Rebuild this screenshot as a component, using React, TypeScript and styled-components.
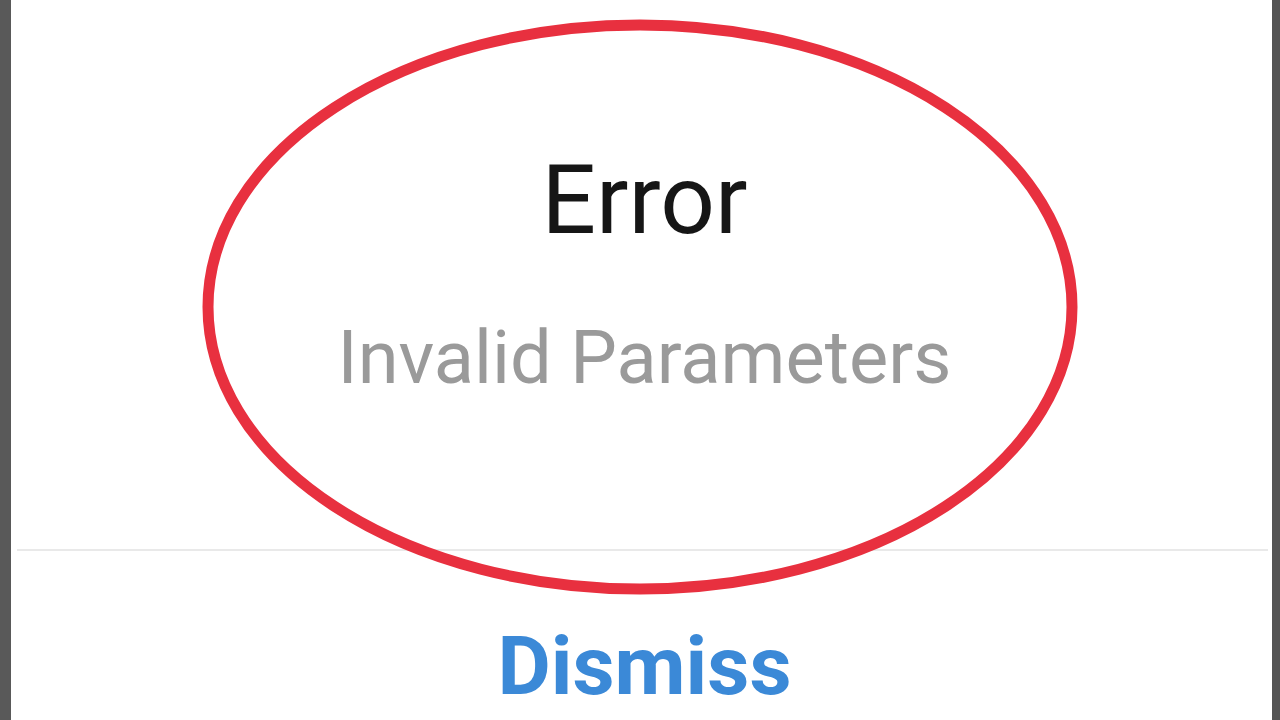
import React from "react";
import styled, { createGlobalStyle } from "styled-components";

const Global = createGlobalStyle`
  html, body { margin: 0; padding: 0; background: #ffffff; }
  body { font-family: Roboto, "Liberation Sans", sans-serif; }
`;

const Screen = styled.div`
  position: relative;
  display: flex;
  width: 1280px;
  height: 720px;
  overflow: hidden;
  background: #ffffff;
`;

const Edge = styled.div<{ $w: number; $shade: string }>`
  flex: 0 0 ${(p) => p.$w}px;
  background: ${(p) => p.$shade};
`;

const Dialog = styled.div`
  flex: 1;
  display: flex;
  flex-direction: column;
  background: #ffffff;
  padding-left: 6px;
`;

const Body = styled.div`
  height: 549px;
  box-sizing: border-box;
  padding-top: 152px;
  display: flex;
  flex-direction: column;
  align-items: center;
`;

const Title = styled.div`
  font-size: 96px;
  line-height: 1;
  color: #161616;
  font-weight: 400;
`;

const Message = styled.div`
  margin-top: 73px;
  font-size: 74px;
  line-height: 1;
  color: #9a9a9a;
  font-weight: 400;
`;

const Divider = styled.div`
  height: 2px;
  background: #e9e9e9;
  margin-right: 4px;
`;

const Actions = styled.div`
  padding-top: 74px;
  display: flex;
  justify-content: center;
`;

const DismissButton = styled.div`
  font-size: 82px;
  line-height: 1;
  font-weight: 700;
  color: #3b89d7;
`;

const Highlight = styled.svg`
  position: absolute;
  left: 0;
  top: 0;
  width: 1280px;
  height: 720px;
  pointer-events: none;
`;

export default function App() {
  return (
    <>
      <Global />
      <Screen>
        <Edge $w={11} $shade="#595959" />
        <Dialog>
          <Body>
            <Title>Error</Title>
            <Message>Invalid Parameters</Message>
          </Body>
          <Divider />
          <Actions>
            <DismissButton>Dismiss</DismissButton>
          </Actions>
        </Dialog>
        <Edge $w={8} $shade="#545454" />
        <Highlight viewBox="0 0 1280 720">
          <ellipse
            cx="640"
            cy="307"
            rx="432"
            ry="282"
            fill="none"
            stroke="#e8303f"
            strokeWidth="11"
          />
        </Highlight>
      </Screen>
    </>
  );
}
